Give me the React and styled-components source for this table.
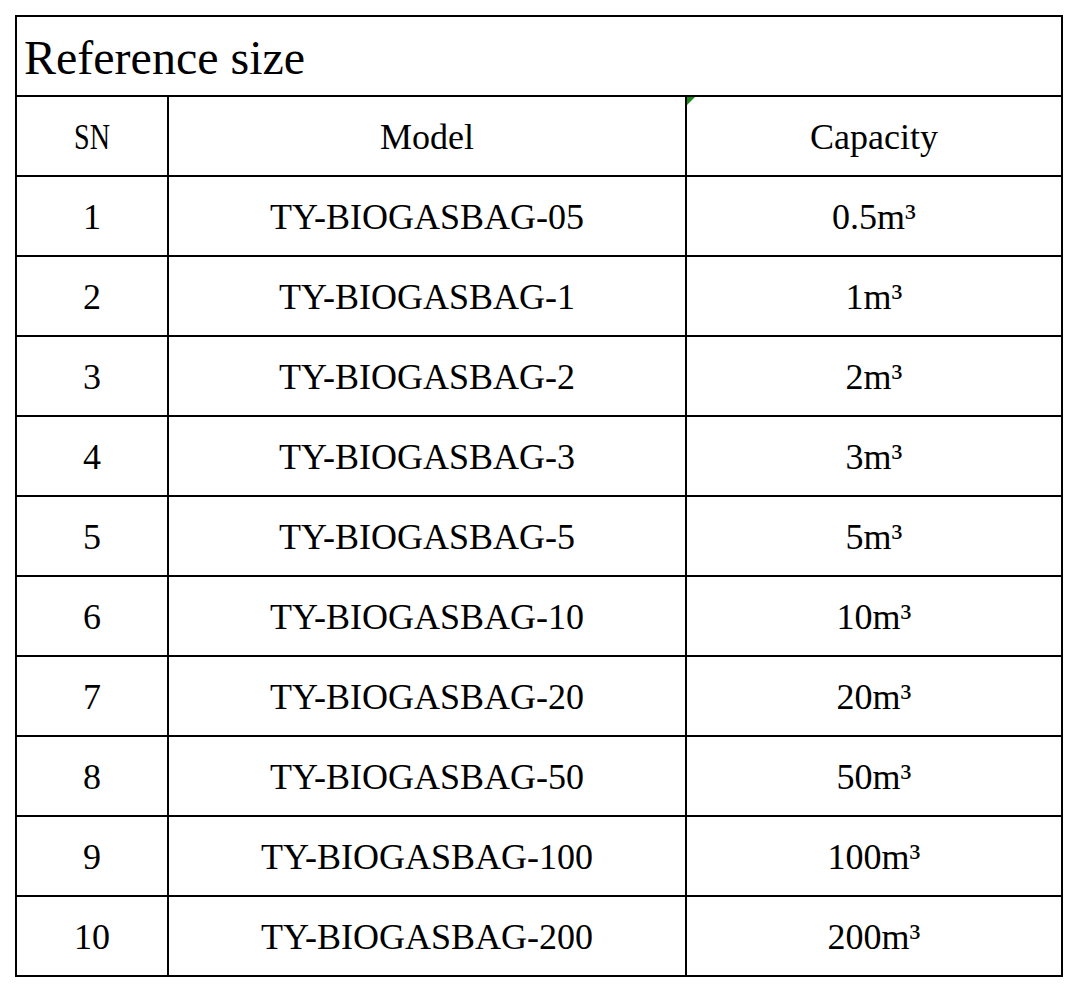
import React from "react";
import styled, { createGlobalStyle } from "styled-components";

const GlobalStyle = createGlobalStyle`
  html, body {
    margin: 0;
    padding: 0;
    background: #ffffff;
  }
  body {
    font-family: "Liberation Serif", "Times New Roman", serif;
    color: #000000;
  }
`;

const Page = styled.div`
  padding: 15px 0 0 15px;
`;

const Sheet = styled.div`
  display: grid;
  grid-template-columns: 150px 516px 374px;
  grid-auto-rows: 78px;
  gap: 2px;
  padding: 2px;
  width: max-content;
  background: #000000;
`;

const TitleCell = styled.div`
  grid-column: 1 / -1;
  background: #ffffff;
  display: flex;
  align-items: center;
  padding: 3px 0 0 7px;
  font-size: 48px;
`;

const Cell = styled.div`
  position: relative;
  background: #ffffff;
  display: flex;
  align-items: center;
  justify-content: center;
  padding-top: 2px;
  font-size: 36px;
  white-space: nowrap;
`;

const Narrow = styled.span`
  display: inline-block;
  transform: scaleX(0.78);
`;

const Marker = styled.span`
  position: absolute;
  top: 0;
  left: 0;
  width: 0;
  height: 0;
  border-top: 8px solid #1a8a1a;
  border-right: 8px solid transparent;
`;

const rows = [
  ["1", "TY-BIOGASBAG-05", "0.5m³"],
  ["2", "TY-BIOGASBAG-1", "1m³"],
  ["3", "TY-BIOGASBAG-2", "2m³"],
  ["4", "TY-BIOGASBAG-3", "3m³"],
  ["5", "TY-BIOGASBAG-5", "5m³"],
  ["6", "TY-BIOGASBAG-10", "10m³"],
  ["7", "TY-BIOGASBAG-20", "20m³"],
  ["8", "TY-BIOGASBAG-50", "50m³"],
  ["9", "TY-BIOGASBAG-100", "100m³"],
  ["10", "TY-BIOGASBAG-200", "200m³"],
];

const App = () => {
  return (
    <Page>
      <GlobalStyle />
      <Sheet>
        <TitleCell>Reference size</TitleCell>
        <Cell>
          <Narrow>SN</Narrow>
        </Cell>
        <Cell>Model</Cell>
        <Cell>
          <Marker />
          Capacity
        </Cell>
        {rows.map(([sn, model, cap]) => (
          <React.Fragment key={sn}>
            <Cell>{sn}</Cell>
            <Cell>{model}</Cell>
            <Cell>{cap}</Cell>
          </React.Fragment>
        ))}
      </Sheet>
    </Page>
  );
};

export default App;
